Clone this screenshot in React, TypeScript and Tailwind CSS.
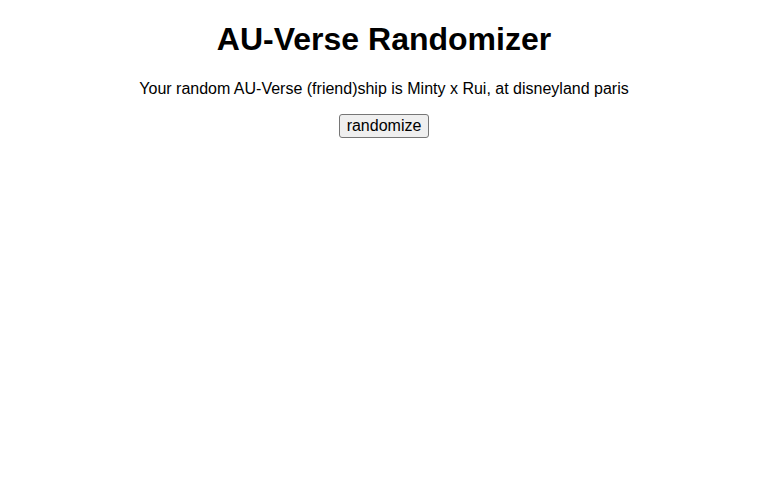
import React, { useState } from 'react';

const NAMES = ['Minty', 'Rui', 'Sol', 'Kai', 'Nova', 'Juno'];
const PLACES = ['disneyland paris', 'a rooftop cafe', 'the beach', 'a space station'];

const App: React.FC = () => {
  const [pick, setPick] = useState({ a: 'Minty', b: 'Rui', place: 'disneyland paris' });

  const randomize = () => {
    const a = NAMES[Math.floor(Math.random() * NAMES.length)];
    let b = NAMES[Math.floor(Math.random() * NAMES.length)];
    while (b === a) b = NAMES[Math.floor(Math.random() * NAMES.length)];
    setPick({ a, b, place: PLACES[Math.floor(Math.random() * PLACES.length)] });
  };

  return (
    <div className="min-h-screen bg-white text-center text-black font-['Liberation_Sans',Arial,sans-serif]">
      <h1 className="pt-[21px] text-[32px] font-bold leading-[37px]">AU-Verse Randomizer</h1>
      <p className="mt-[22px] text-base leading-[18px]">
        Your random AU-Verse (friend)ship is {pick.a} x {pick.b}, at {pick.place}
      </p>
      <button
        onClick={randomize}
        className="mt-4 rounded-[3px] border border-[#767676] bg-[#efefef] px-[7px] py-[2px] text-base leading-[18px] text-black"
      >
        randomize
      </button>
    </div>
  );
};

export default App;
